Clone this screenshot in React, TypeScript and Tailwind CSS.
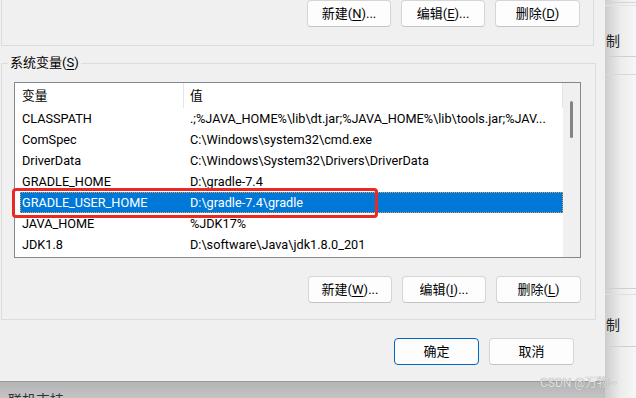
import React from "react";

const rows: [string, string][] = [
  ["CLASSPATH", ".;%JAVA_HOME%\\lib\\dt.jar;%JAVA_HOME%\\lib\\tools.jar;%JAV..."],
  ["ComSpec", "C:\\Windows\\system32\\cmd.exe"],
  ["DriverData", "C:\\Windows\\System32\\Drivers\\DriverData"],
  ["GRADLE_HOME", "D:\\gradle-7.4"],
  ["GRADLE_USER_HOME", "D:\\gradle-7.4\\gradle"],
  ["JAVA_HOME", "%JDK17%"],
  ["JDK1.8", "D:\\software\\Java\\jdk1.8.0_201"],
];

function WinButton({
  label,
  hotkey,
  tail = "",
  primary = false,
  width = "w-[84px]",
}: {
  label: string;
  hotkey?: string;
  tail?: string;
  primary?: boolean;
  width?: string;
}) {
  return (
    <div
      className={
        "flex h-[27px] items-center justify-center rounded-[4px] bg-[#fdfdfd] text-[13px] text-black " +
        width +
        (primary
          ? " border-[1.5px] border-[#0067c0]"
          : " border border-[#d5d5d5] border-b-[#c4c4c4]")
      }
    >
      <span>
        {label}
        {hotkey && (
          <>
            (<span className="underline underline-offset-2">{hotkey}</span>)
          </>
        )}
        {tail}
      </span>
    </div>
  );
}

function VarList() {
  return (
    <div className="relative ml-[6px] flex h-[176px] w-[567px] border border-[#828790] bg-white text-[12.7px]">
      <div className="flex flex-1 flex-col">
        <div className="flex h-[25px] items-stretch">
          <div className="flex w-[168px] items-center pl-[7px] pt-px">变量</div>
          <div className="w-px bg-[#e5e5e5]" />
          <div className="flex flex-1 items-center pl-[6px] pt-px">值</div>
          <div className="w-px bg-[#e5e5e5]" />
        </div>
        {rows.map(([name, value]) => {
          const selected = name === "GRADLE_USER_HOME";
          return (
            <div
              key={name}
              className={
                "ml-[5px] flex h-[21px] items-center whitespace-nowrap " +
                (selected
                  ? "border border-dotted border-[#e0a050] bg-[#0078d7] text-white"
                  : "border border-transparent")
              }
            >
              <div className="w-[169px] overflow-hidden pl-[1px]">{name}</div>
              <div className="flex-1 overflow-hidden">{value}</div>
            </div>
          );
        })}
      </div>
      <div className="flex w-[17px] justify-center bg-[#f0f0f0] pt-[18px]">
        <div className="h-[37px] w-[3px] rounded-full bg-[#858585]" />
      </div>
      {/* red annotation box */}
      <div className="pointer-events-none absolute left-[-3px] top-[105px] h-[30px] w-[366px] rounded-[4px] border-[3px] border-[#e62a24]" />
    </div>
  );
}

function BackWindow() {
  return (
    <div className="flex flex-1 flex-col bg-linear-to-r from-[#cdcdcd] via-[#ececec] to-[#f7f7f7]">
      <div className="mt-[2px] h-px bg-[#d4d4d4]" />
      <div className="mt-[2px] h-px bg-[#e2e2e2]" />
      <div className="mt-[26px] h-[18px] pl-px text-[14px] leading-[18px] text-[#222]">制</div>
      <div className="mt-[6px] h-px bg-[#d0d0d0]" />
      <div className="mt-[17px] h-px bg-[#d8d8d8]" />
      <div className="mt-[213px] h-px bg-[#d0d0d0]" />
      <div className="mt-[5px] h-px bg-[#dedede]" />
      <div className="mt-[21px] h-[18px] pl-px text-[14px] leading-[18px] text-[#222]">制</div>
      <div className="mt-[12px] h-px bg-[#d0d0d0]" />
    </div>
  );
}

export default function App() {
  return (
    <div className="relative flex h-[398px] w-[636px] overflow-hidden font-['Roboto','Noto_Sans_CJK_SC',sans-serif] text-[13px] text-black">
      <div className="flex w-[605px] flex-col">
        <div className="flex h-[382px] shrink-0 flex-col border-b border-[#9a9a9a] bg-[#f0f0f0]">
          <div className="ml-px flex h-[46px] w-[593px] items-start justify-end gap-[10px] border-x border-b border-[#dcdcdc] pr-[13px]">
            <WinButton label="新建" hotkey="N" tail="..." />
            <WinButton label="编辑" hotkey="E" tail="..." />
            <WinButton label="删除" hotkey="D" width="w-[85px]" />
          </div>
          <fieldset className="ml-px mt-[8px] w-[593px] border border-[#dcdcdc] pb-[16px] pl-[6px] pr-[14px] pt-[10px]">
            <legend className="px-[2px] text-[13px] leading-[18px]">
              系统变量(<span className="underline underline-offset-2">S</span>)
            </legend>
            <VarList />
            <div className="mt-[18px] flex justify-end gap-[10px]">
              <WinButton label="新建" hotkey="W" tail="..." />
              <WinButton label="编辑" hotkey="I" tail="..." />
              <WinButton label="删除" hotkey="L" width="w-[85px]" />
            </div>
          </fieldset>
          <div className="mt-[18px] flex justify-end gap-[10px] pr-[31px]">
            <WinButton label="确定" primary width="w-[85px]" />
            <WinButton label="取消" width="w-[85px]" />
          </div>
        </div>
        <div className="flex-1 overflow-hidden bg-linear-to-b from-[#b4b4b4] to-[#c4c4c4] pl-[8px] pt-[9px] text-[14px] leading-[18px] text-[#333]">
          联机支持
        </div>
      </div>
      <BackWindow />
      <div className="pointer-events-none absolute left-[540px] top-[375px] text-[12px] leading-[16px] text-[#e4e4e4] [text-shadow:0_0_1px_#8a8a8a]">
        CSDN @万物~
      </div>
    </div>
  );
}
